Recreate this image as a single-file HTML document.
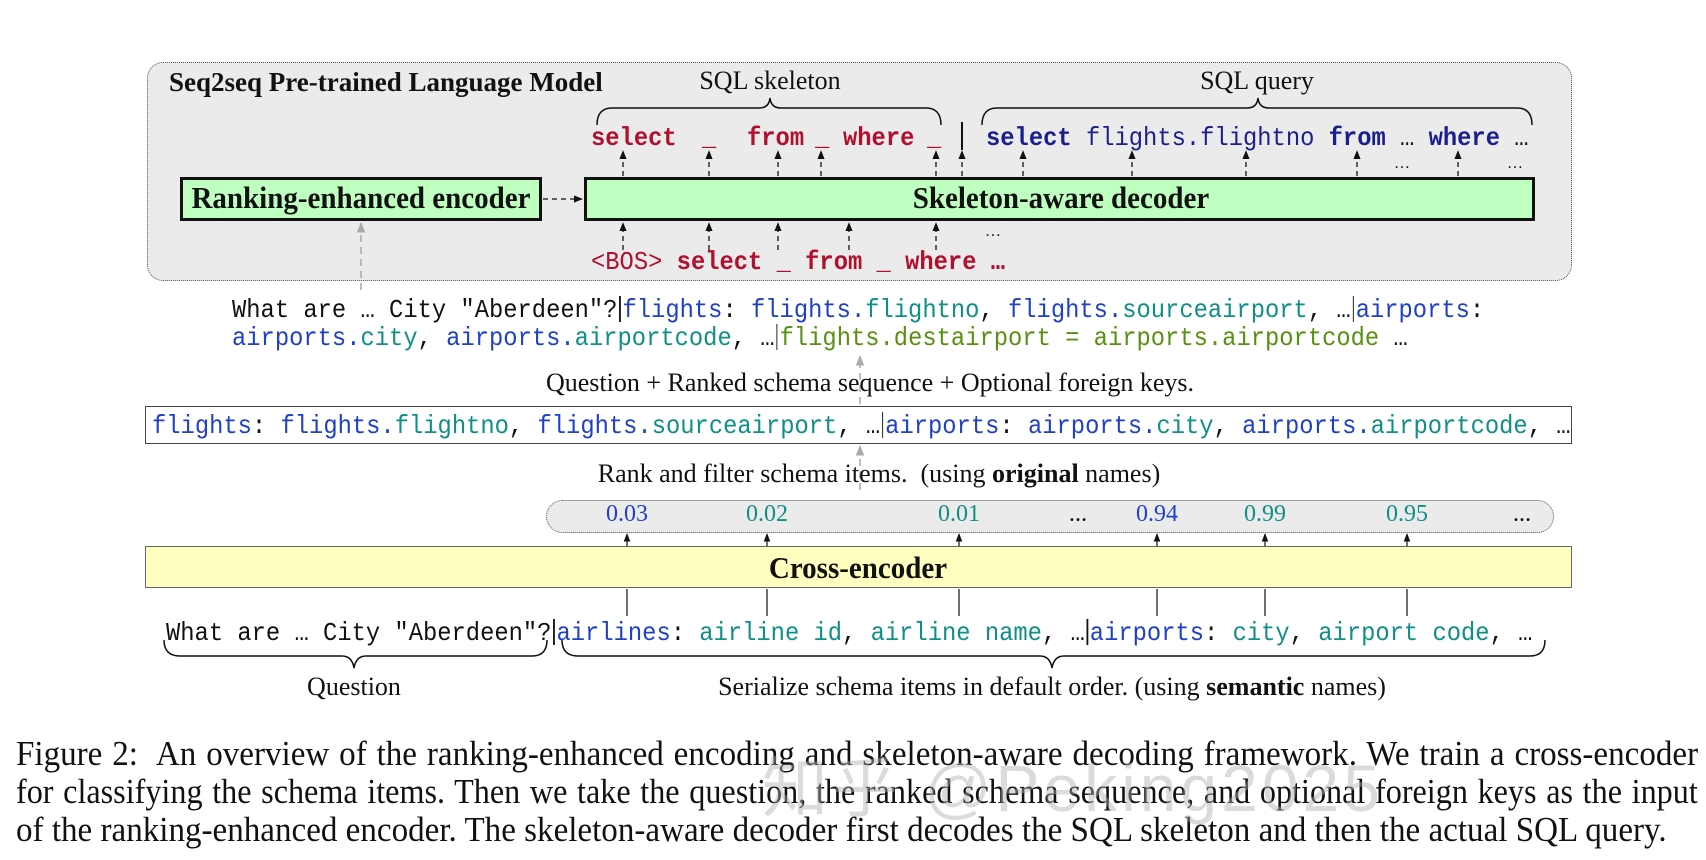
<!DOCTYPE html>
<html><head><meta charset="utf-8"><style>
body{margin:0;width:1706px;height:860px;background:#fff;position:relative;overflow:hidden;font-family:"Liberation Serif",serif;color:#111}
.a{position:absolute;white-space:pre}
.m{font-family:"Liberation Mono",monospace;font-size:26px;transform:scaleX(0.915);transform-origin:0 0}
.b{font-weight:bold}
.r{color:#b0102e}.n{color:#1a1f8c}.bl{color:#2040c8}.t{color:#0f8f85}.g{color:#5a9012}
.box{position:absolute;box-sizing:border-box}
.c{transform:translateX(-50%)}
.l{font-size:26px}
.bt{font-size:31px;transform:translateX(-50%) scaleX(0.935)}
.cap{position:absolute;left:16px;width:1780px;font-size:35px;transform:scaleX(0.945);transform-origin:0 0;white-space:nowrap}
.j{text-align:justify;text-align-last:justify;white-space:normal}
.vb{display:inline-block;width:1.5px;height:26px;background:#111;vertical-align:-5px;margin:0 2px}
</style></head><body>
<div class="box" style="left:147px;top:62px;width:1425px;height:219px;background:#ebebeb;border:1.5px dotted #555;border-radius:16px"></div>
<div class="box" style="left:180px;top:177px;width:362px;height:44px;background:#bfffbf;border:3px solid #111"></div>
<div class="box" style="left:584px;top:177px;width:951px;height:44px;background:#bfffbf;border:3px solid #111"></div>
<div class="box" style="left:145px;top:406px;width:1427px;height:38px;background:#fff;border:1.5px solid #444"></div>
<div class="box" style="left:546px;top:500px;width:1008px;height:33px;background:#ebebeb;border:1.5px dotted #555;border-radius:17px"></div>
<div class="box" style="left:145px;top:546px;width:1427px;height:42px;background:#ffffc0;border:1.5px solid #666"></div>

<svg class="a" style="left:0;top:0" width="1706" height="860">
<defs><marker id="h" viewBox="0 0 10 10" refX="9" refY="5" markerWidth="7" markerHeight="9" orient="auto"><path d="M0,1L10,5L0,9z" fill="#111"/></marker>
<marker id="hg" viewBox="0 0 10 10" refX="9" refY="5" markerWidth="7" markerHeight="9" orient="auto"><path d="M0,1L10,5L0,9z" fill="#aaa"/></marker></defs>
<g fill="none" stroke="#111" stroke-width="1.5">
<path d="M597,125Q597,108 612,108L759,108Q769,108 770,98Q771,108 781,108L926,108Q941,108 941,125"/>
<path d="M982,125Q982,108 997,108L1247,108Q1257,108 1258,98Q1259,108 1269,108L1517,108Q1532,108 1532,125"/>
<path d="M164,640Q164,656 180,656L342,656Q352,656 354,668Q356,656 366,656L532,656Q547,656 547,640"/>
<path d="M562,640Q562,656 578,656L1040,656Q1050,656 1052,668Q1054,656 1064,656L1530,656Q1545,656 1545,640"/>
</g>
<g stroke="#111" stroke-width="1.3" stroke-dasharray="5,4" marker-end="url(#h)">
<line x1="623" y1="176" x2="623" y2="151"/><line x1="709" y1="176" x2="709" y2="151"/><line x1="778" y1="176" x2="778" y2="151"/><line x1="821" y1="176" x2="821" y2="151"/><line x1="936" y1="176" x2="936" y2="151"/><line x1="962" y1="176" x2="962" y2="151"/><line x1="1023" y1="176" x2="1023" y2="151"/><line x1="1132" y1="176" x2="1132" y2="151"/><line x1="1246" y1="176" x2="1246" y2="151"/><line x1="1357" y1="176" x2="1357" y2="151"/><line x1="1458" y1="176" x2="1458" y2="151"/>
<line x1="623" y1="250" x2="623" y2="223"/><line x1="709" y1="250" x2="709" y2="223"/><line x1="778" y1="250" x2="778" y2="223"/><line x1="849" y1="250" x2="849" y2="223"/><line x1="936" y1="250" x2="936" y2="223"/>
<line x1="543" y1="199" x2="582" y2="199"/>
</g>
<g stroke="#aaa" stroke-width="1.5" stroke-dasharray="7,5" marker-end="url(#hg)">
<line x1="361" y1="290" x2="361" y2="223"/><line x1="860" y1="404" x2="860" y2="356"/><line x1="860" y1="490" x2="860" y2="446"/>
</g>
<g stroke="#111" stroke-width="1.2" marker-end="url(#h)">
<line x1="627" y1="546" x2="627" y2="534"/><line x1="767" y1="546" x2="767" y2="534"/><line x1="959" y1="546" x2="959" y2="534"/><line x1="1157" y1="546" x2="1157" y2="534"/><line x1="1265" y1="546" x2="1265" y2="534"/><line x1="1407" y1="546" x2="1407" y2="534"/>
</g>
<g stroke="#111" stroke-width="1.2">
<line x1="627" y1="589" x2="627" y2="616"/><line x1="767" y1="589" x2="767" y2="616"/><line x1="959" y1="589" x2="959" y2="616"/><line x1="1157" y1="589" x2="1157" y2="616"/><line x1="1265" y1="589" x2="1265" y2="616"/><line x1="1407" y1="589" x2="1407" y2="616"/>
</g>
</svg>

<div class="a b" style="left:169px;top:67px;font-size:27px">Seq2seq Pre-trained Language Model</div>
<div class="a c l" style="left:770px;top:66px">SQL skeleton</div>
<div class="a c l" style="left:1257px;top:66px">SQL query</div>

<div class="a m b r" style="left:591px;top:123px">select</div>
<div class="a m b r" style="left:702px;top:123px">_</div>
<div class="a m b r" style="left:747px;top:123px">from</div>
<div class="a m b r" style="left:815px;top:123px">_</div>
<div class="a m b r" style="left:843px;top:123px">where</div>
<div class="a m b r" style="left:927px;top:123px">_</div>
<div class="a" style="left:961px;top:122px;width:1.5px;height:28px;background:#111"></div>
<div class="a m" style="left:986px;top:123px"><span class="b n">select</span> <span class="n">flights.flightno</span> <span class="b n">from</span> … <span class="b n">where</span> …</div>
<div class="a" style="left:1394px;top:155px;font-size:16px">…</div>
<div class="a" style="left:1507px;top:155px;font-size:16px">…</div>

<div class="a b bt" style="left:361px;top:180px">Ranking-enhanced encoder</div>
<div class="a b bt" style="left:1061px;top:180px">Skeleton-aware decoder</div>

<div class="a" style="left:985px;top:223px;font-size:16px">…</div>
<div class="a m" style="left:591px;top:247px"><span class="r">&lt;BOS&gt;</span> <span class="b r">select _ from _ where …</span></div>

<div class="a m" style="left:232px;top:295px">What are … City "Aberdeen"?<span class="vb"></span><span class="bl">flights</span>: <span class="bl">flights.</span><span class="t">flightno</span>, <span class="bl">flights.</span><span class="t">sourceairport</span>, …<span class="vb"></span><span class="bl">airports</span>:</div>
<div class="a m" style="left:232px;top:323px"><span class="bl">airports.</span><span class="t">city</span>, <span class="bl">airports.</span><span class="t">airportcode</span>, …<span class="vb"></span><span class="g">flights.destairport = airports.airportcode</span> …</div>

<div class="a c l" style="left:870px;top:368px">Question + Ranked schema sequence + Optional foreign keys.</div>
<div class="a m" style="left:152px;top:411px"><span class="bl">flights</span>: <span class="bl">flights.</span><span class="t">flightno</span>, <span class="bl">flights.</span><span class="t">sourceairport</span>, …<span class="vb"></span><span class="bl">airports</span>: <span class="bl">airports.</span><span class="t">city</span>, <span class="bl">airports.</span><span class="t">airportcode</span>, …</div>
<div class="a c l" style="left:879px;top:459px">Rank and filter schema items.  (using <b>original</b> names)</div>

<div class="a c bl" style="left:627px;top:501px;font-size:24px">0.03</div>
<div class="a c t" style="left:767px;top:501px;font-size:24px">0.02</div>
<div class="a c t" style="left:959px;top:501px;font-size:24px">0.01</div>
<div class="a c b" style="left:1078px;top:505px;font-size:18px">…</div>
<div class="a c bl" style="left:1157px;top:501px;font-size:24px">0.94</div>
<div class="a c t" style="left:1265px;top:501px;font-size:24px">0.99</div>
<div class="a c t" style="left:1407px;top:501px;font-size:24px">0.95</div>
<div class="a c b" style="left:1522px;top:505px;font-size:18px">…</div>

<div class="a b bt" style="left:858px;top:550px">Cross-encoder</div>

<div class="a m" style="left:166px;top:618px">What are … City "Aberdeen"?<span class="vb"></span><span class="bl">airlines</span>: <span class="t">airline id</span>, <span class="t">airline name</span>, …<span class="vb"></span><span class="bl">airports</span>: <span class="t">city</span>, <span class="t">airport code</span>, …</div>
<div class="a c l" style="left:354px;top:672px">Question</div>
<div class="a c l" style="left:1052px;top:672px">Serialize schema items in default order. (using <b>semantic</b> names)</div>

<div class="cap j" style="top:734px">Figure 2:&nbsp; An overview of the ranking-enhanced encoding and skeleton-aware decoding framework. We train a cross-encoder</div>
<div class="cap j" style="top:772px;width:1830px;transform:scaleX(0.919)">for classifying the schema items. Then we take the question, the ranked schema sequence, and optional foreign keys as the input</div>
<div class="cap" style="top:810px">of the ranking-enhanced encoder. The skeleton-aware decoder first decodes the SQL skeleton and then the actual SQL query.</div>
<div class="a" style="left:762px;top:735px;font-size:66px;letter-spacing:4px;color:rgba(175,175,175,0.45);font-family:'Liberation Sans','Noto Sans CJK SC',sans-serif">知乎 @Peking2025</div>
</body></html>
